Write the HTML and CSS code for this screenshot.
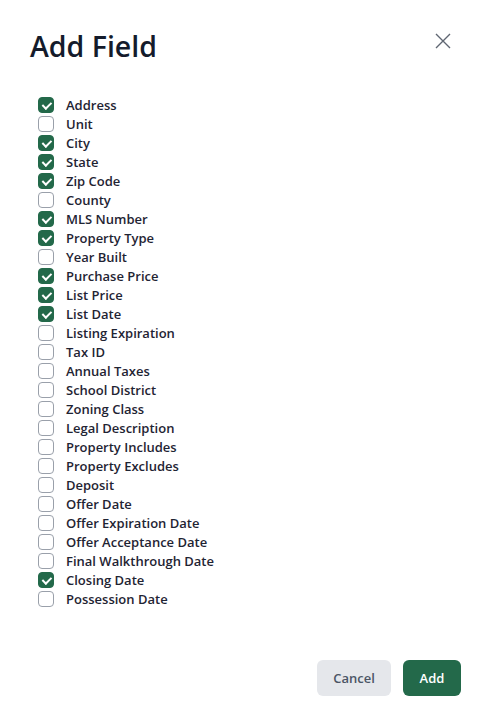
FILE: index.html
```html
<!DOCTYPE html>
<html>
<head>
<meta charset="utf-8">
<link rel="stylesheet" href="styles.css">
</head>
<body>
<div class="dialog">
  <div class="header">
    <h1 class="title">Add Field</h1>
    <button class="close" aria-label="Close">
      <svg width="16" height="16" viewBox="0 0 16 16"><path d="M1 1L15 15M15 1L1 15" stroke="#5f6672" stroke-width="1.4" fill="none"/></svg>
    </button>
  </div>
  <ul class="fields">
    <li class="field on"><span class="box"></span>Address</li>
    <li class="field"><span class="box"></span>Unit</li>
    <li class="field on"><span class="box"></span>City</li>
    <li class="field on"><span class="box"></span>State</li>
    <li class="field on"><span class="box"></span>Zip Code</li>
    <li class="field"><span class="box"></span>County</li>
    <li class="field on"><span class="box"></span>MLS Number</li>
    <li class="field on"><span class="box"></span>Property Type</li>
    <li class="field"><span class="box"></span>Year Built</li>
    <li class="field on"><span class="box"></span>Purchase Price</li>
    <li class="field on"><span class="box"></span>List Price</li>
    <li class="field on"><span class="box"></span>List Date</li>
    <li class="field"><span class="box"></span>Listing Expiration</li>
    <li class="field"><span class="box"></span>Tax ID</li>
    <li class="field"><span class="box"></span>Annual Taxes</li>
    <li class="field"><span class="box"></span>School District</li>
    <li class="field"><span class="box"></span>Zoning Class</li>
    <li class="field"><span class="box"></span>Legal Description</li>
    <li class="field"><span class="box"></span>Property Includes</li>
    <li class="field"><span class="box"></span>Property Excludes</li>
    <li class="field"><span class="box"></span>Deposit</li>
    <li class="field"><span class="box"></span>Offer Date</li>
    <li class="field"><span class="box"></span>Offer Expiration Date</li>
    <li class="field"><span class="box"></span>Offer Acceptance Date</li>
    <li class="field"><span class="box"></span>Final Walkthrough Date</li>
    <li class="field on"><span class="box"></span>Closing Date</li>
    <li class="field"><span class="box"></span>Possession Date</li>
  </ul>
  <div class="footer">
    <button class="btn cancel">Cancel</button>
    <button class="btn add">Add</button>
  </div>
</div>
</body>
</html>
```
FILE: styles.css
```css
html, body {
  margin: 0;
  padding: 0;
  background: #ffffff;
}
body {
  font-family: "Open Sans", "Noto Sans", sans-serif;
  color: #1f2433;
}
.dialog {
  width: 491px;
  height: 716px;
  box-sizing: border-box;
  padding: 26px 30px 20px 30px;
  display: flex;
  flex-direction: column;
}
.header {
  display: flex;
  justify-content: space-between;
  align-items: flex-start;
}
.title {
  margin: 0;
  font-size: 28.5px;
  font-weight: 600;
  line-height: 40px;
  color: #141b2b;
}
.close {
  border: 0;
  background: none;
  padding: 0;
  margin: 7px 10px 0 0;
  width: 16px;
  height: 16px;
  display: flex;
}
.fields {
  list-style: none;
  margin: 31px 0 0 8px;
  padding: 0;
  display: flex;
  flex-direction: column;
  gap: 3px;
}
.field {
  display: flex;
  align-items: center;
  gap: 12px;
  height: 16px;
  font-size: 13px;
  font-weight: 600;
  color: #1f2433;
}
.box {
  width: 16px;
  height: 16px;
  box-sizing: border-box;
  border: 1.5px solid #9aa0aa;
  border-radius: 4px;
  background: #fff;
  flex: none;
  position: relative;
}
.field.on .box {
  background: #23694a;
  border-color: #23694a;
}
.field.on .box::after {
  content: "";
  position: absolute;
  left: 4.5px;
  top: 2px;
  width: 3.5px;
  height: 7px;
  border-right: 2px solid #fff;
  border-bottom: 2px solid #fff;
  transform: rotate(45deg);
}
.footer {
  margin-top: auto;
  display: flex;
  justify-content: flex-end;
  gap: 12px;
}
.btn {
  height: 36px;
  border: 0;
  border-radius: 6px;
  font-family: "Open Sans", "Noto Sans", sans-serif;
  font-size: 13px;
  font-weight: 600;
  padding: 0;
}
.cancel {
  width: 74px;
  background: #e5e7eb;
  color: #4b5565;
}
.add {
  width: 58px;
  background: #23694a;
  color: #ffffff;
}
```
